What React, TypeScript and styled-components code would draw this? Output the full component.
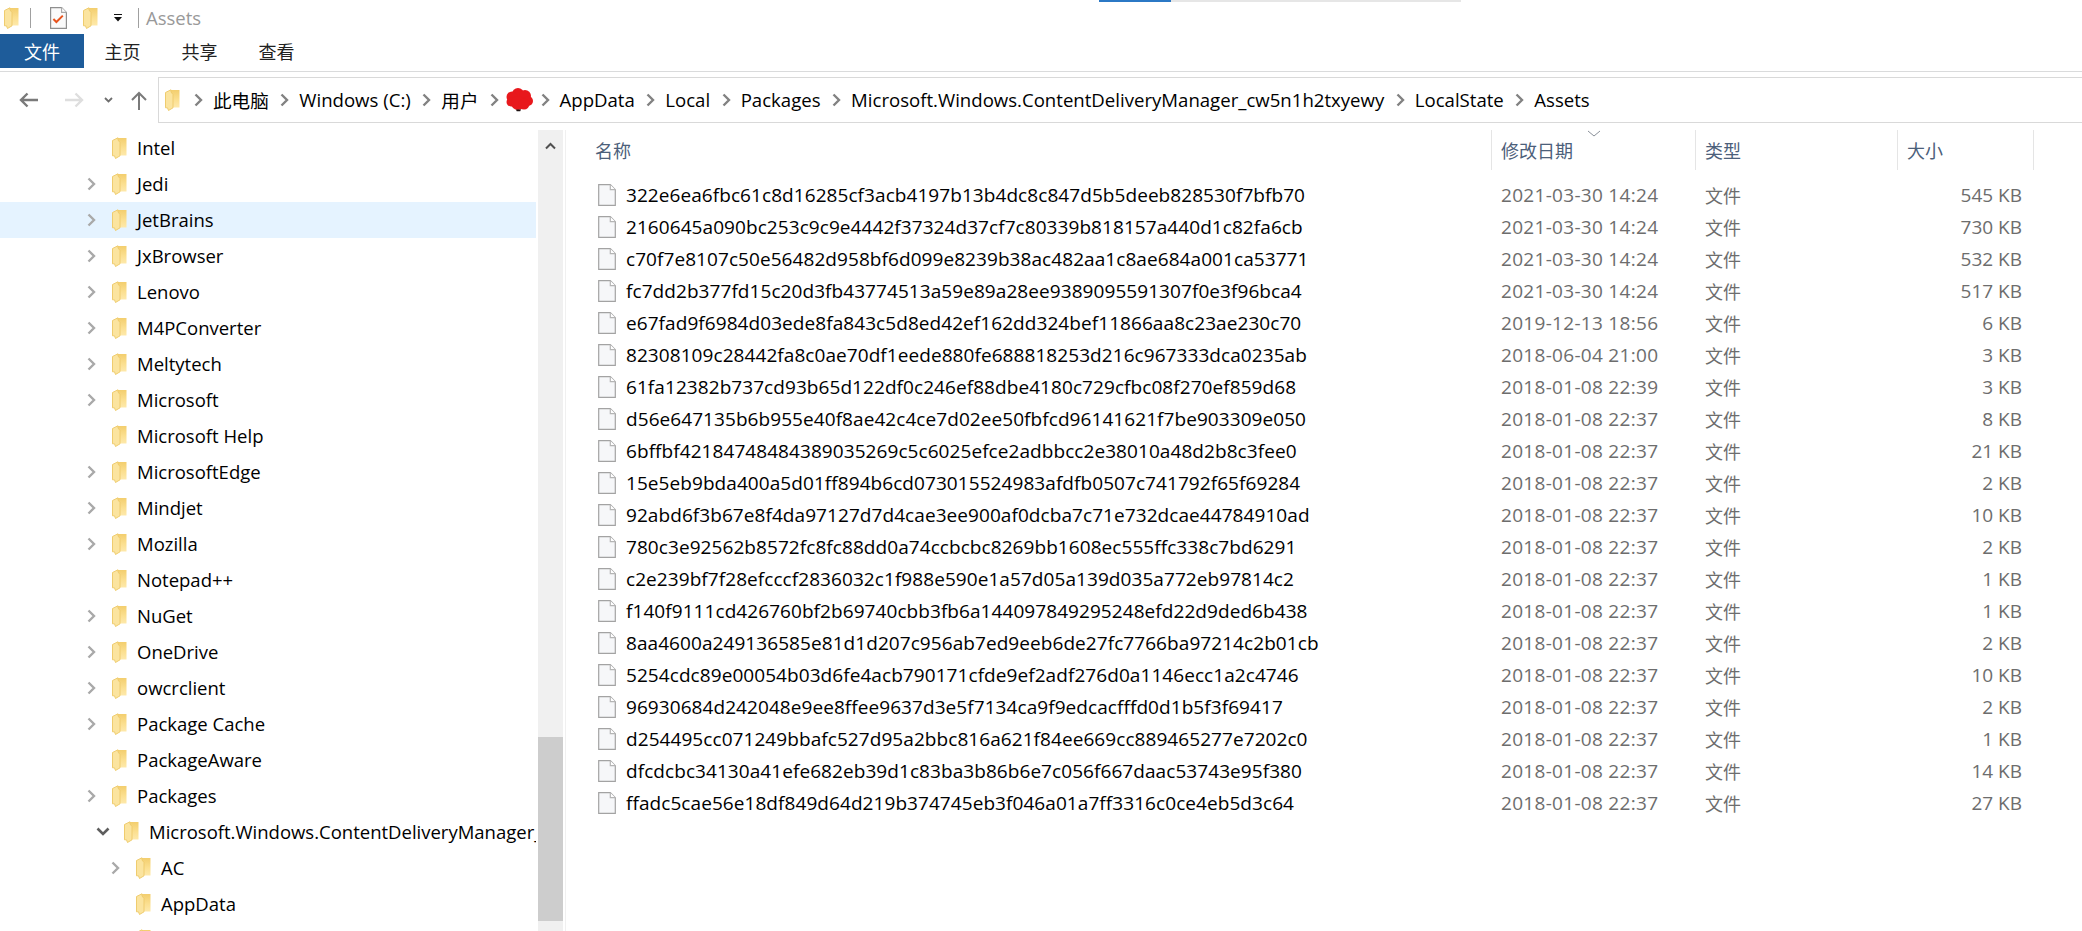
import styled, { createGlobalStyle } from "styled-components";

const uiFont = `"Open Sans", "Noto Sans CJK SC", sans-serif`;

const treeItems = [
  { name: "Intel", level: 0 },
  { name: "Jedi", level: 0, arrow: "right" },
  { name: "JetBrains", level: 0, arrow: "right", hover: true },
  { name: "JxBrowser", level: 0, arrow: "right" },
  { name: "Lenovo", level: 0, arrow: "right" },
  { name: "M4PConverter", level: 0, arrow: "right" },
  { name: "Meltytech", level: 0, arrow: "right" },
  { name: "Microsoft", level: 0, arrow: "right" },
  { name: "Microsoft Help", level: 0 },
  { name: "MicrosoftEdge", level: 0, arrow: "right" },
  { name: "Mindjet", level: 0, arrow: "right" },
  { name: "Mozilla", level: 0, arrow: "right" },
  { name: "Notepad++", level: 0 },
  { name: "NuGet", level: 0, arrow: "right" },
  { name: "OneDrive", level: 0, arrow: "right" },
  { name: "owcrclient", level: 0, arrow: "right" },
  { name: "Package Cache", level: 0, arrow: "right" },
  { name: "PackageAware", level: 0 },
  { name: "Packages", level: 0, arrow: "right" },
  { name: "Microsoft.Windows.ContentDeliveryManager_cw5n1h2txyewy", level: 1, arrow: "down" },
  { name: "AC", level: 2, arrow: "right" },
  { name: "AppData", level: 2 },
  { name: "", level: 2 },
];

const files = [
  ["322e6ea6fbc61c8d16285cf3acb4197b13b4dc8c847d5b5deeb828530f7bfb70", "2021-03-30 14:24", "545 KB"],
  ["2160645a090bc253c9c9e4442f37324d37cf7c80339b818157a440d1c82fa6cb", "2021-03-30 14:24", "730 KB"],
  ["c70f7e8107c50e56482d958bf6d099e8239b38ac482aa1c8ae684a001ca53771", "2021-03-30 14:24", "532 KB"],
  ["fc7dd2b377fd15c20d3fb43774513a59e89a28ee9389095591307f0e3f96bca4", "2021-03-30 14:24", "517 KB"],
  ["e67fad9f6984d03ede8fa843c5d8ed42ef162dd324bef11866aa8c23ae230c70", "2019-12-13 18:56", "6 KB"],
  ["82308109c28442fa8c0ae70df1eede880fe688818253d216c967333dca0235ab", "2018-06-04 21:00", "3 KB"],
  ["61fa12382b737cd93b65d122df0c246ef88dbe4180c729cfbc08f270ef859d68", "2018-01-08 22:39", "3 KB"],
  ["d56e647135b6b955e40f8ae42c4ce7d02ee50fbfcd96141621f7be903309e050", "2018-01-08 22:37", "8 KB"],
  ["6bffbf42184748484389035269c5c6025efce2adbbcc2e38010a48d2b8c3fee0", "2018-01-08 22:37", "21 KB"],
  ["15e5eb9bda400a5d01ff894b6cd073015524983afdfb0507c741792f65f69284", "2018-01-08 22:37", "2 KB"],
  ["92abd6f3b67e8f4da97127d7d4cae3ee900af0dcba7c71e732dcae44784910ad", "2018-01-08 22:37", "10 KB"],
  ["780c3e92562b8572fc8fc88dd0a74ccbcbc8269bb1608ec555ffc338c7bd6291", "2018-01-08 22:37", "2 KB"],
  ["c2e239bf7f28efcccf2836032c1f988e590e1a57d05a139d035a772eb97814c2", "2018-01-08 22:37", "1 KB"],
  ["f140f9111cd426760bf2b69740cbb3fb6a144097849295248efd22d9ded6b438", "2018-01-08 22:37", "1 KB"],
  ["8aa4600a249136585e81d1d207c956ab7ed9eeb6de27fc7766ba97214c2b01cb", "2018-01-08 22:37", "2 KB"],
  ["5254cdc89e00054b03d6fe4acb790171cfde9ef2adf276d0a1146ecc1a2c4746", "2018-01-08 22:37", "10 KB"],
  ["96930684d242048e9ee8ffee9637d3e5f7134ca9f9edcacfffd0d1b5f3f69417", "2018-01-08 22:37", "2 KB"],
  ["d254495cc071249bbafc527d95a2bbc816a621f84ee669cc889465277e7202c0", "2018-01-08 22:37", "1 KB"],
  ["dfcdcbc34130a41efe682eb39d1c83ba3b86b6e7c056f667daac53743e95f380", "2018-01-08 22:37", "14 KB"],
  ["ffadc5cae56e18df849d64d219b374745eb3f046a01a7ff3316c0ce4eb5d3c64", "2018-01-08 22:37", "27 KB"],
];

const crumbs = [
  "此电脑",
  "Windows (C:)",
  "用户",
  "",
  "AppData",
  "Local",
  "Packages",
  "Microsoft.Windows.ContentDeliveryManager_cw5n1h2txyewy",
  "LocalState",
  "Assets",
];

function FolderIcon() {
  return (
    <svg width="15" height="22" viewBox="0 0 15 22">
      <defs>
        <linearGradient id="folderBody" x1="0" y1="0" x2="0" y2="1">
          <stop offset="0" stopColor="#f3ce6e" />
          <stop offset="0.55" stopColor="#fbdf8f" />
          <stop offset="1" stopColor="#fee9ab" />
        </linearGradient>
      </defs>
      <path d="M5 1h9.500v17.500H5z" fill="url(#folderBody)" />
      <path d="M.5 3.500 6 .8V3l2 2.500v13.300L3.500 21.500 2.500 18.800H.5z" fill="#fbe49f" stroke="#efcc6e" strokeWidth="1" />
    </svg>
  );
}

function FileIcon() {
  return (
    <svg width="18" height="22" viewBox="0 0 18 22">
      <path d="M.7.7h11.600l5 5v15.600H.7z" fill="#f6f7f9" stroke="#a3a3a3" strokeWidth="1.2" />
      <path d="M12.300.7v5h5" fill="#fff" stroke="#b5b5b5" strokeWidth="1.2" />
    </svg>
  );
}

function Chevron({ dark }: { dark?: boolean }) {
  return (
    <svg width="9" height="14" viewBox="0 0 9 14">
      <path d="M1.500 1.500 7 7l-5.500 5.500" fill="none" stroke={dark ? "#828282" : "#a9a9a9"} strokeWidth="2.4" />
    </svg>
  );
}

function ChevronDown() {
  return (
    <svg width="14" height="10" viewBox="0 0 14 10">
      <path d="M1.500 1.500 7 7l5.500-5.500" fill="none" stroke="#5e5e5e" strokeWidth="2.6" />
    </svg>
  );
}

export default function App() {
  return (
    <Page>
      <GlobalStyle />
      <TitleBar>
        <FolderIcon />
        <TitleRule $left={11} />
        <TitleSlot $left={19}>
          <svg width="17" height="22" viewBox="0 0 17 22">
            <path d="M.6.6h11l4.800 4.800v16H.6z" fill="#fafafa" stroke="#8f8f8f" strokeWidth="1.2" />
            <path d="M11.600.6v4.800h4.800" fill="#fff" stroke="#a8a8a8" strokeWidth="1.1" />
            <path d="M3.400 12l3 3 6.400-6.400" fill="none" stroke="#e8541e" strokeWidth="2" />
          </svg>
        </TitleSlot>
        <TitleSlot $left={16}>
          <FolderIcon />
        </TitleSlot>
        <TitleSlot $left={16}>
          <svg width="8" height="8" viewBox="0 0 8 8">
            <path d="M0 0h8v1H0z" fill="#111" />
            <path d="M0 3h8L4 7.500z" fill="#111" />
          </svg>
        </TitleSlot>
        <TitleRule $left={16} />
        <WindowName>Assets</WindowName>
        <LoadBar />
      </TitleBar>

      <TabRow>
        <FileTab>文件</FileTab>
        <Tab>主页</Tab>
        <Tab>共享</Tab>
        <Tab>查看</Tab>
      </TabRow>

      <NavBar>
        <NavArrows>
          <svg width="19" height="16" viewBox="0 0 19 16">
            <path d="M19 8H2M8.500 1.500 2 8l6.500 6.500" fill="none" stroke="#7a7a7a" strokeWidth="2.4" />
          </svg>
          <svg width="19" height="16" viewBox="0 0 19 16">
            <path d="M0 8h17M10.500 1.500 17 8l-6.500 6.500" fill="none" stroke="#dedede" strokeWidth="2.4" />
          </svg>
          <svg width="9" height="6" viewBox="0 0 9 6">
            <path d="M1 1l3.500 3.500L8 1" fill="none" stroke="#6e6e6e" strokeWidth="1.8" />
          </svg>
          <svg width="16" height="19" viewBox="0 0 16 19">
            <path d="M8 19V2M1 9l7-7 7 7" fill="none" stroke="#7a7a7a" strokeWidth="2" />
          </svg>
        </NavArrows>
        <AddressBox>
          <FolderIcon />
          <CrumbList>
            {crumbs.map((crumb, i) => (
              <Crumb key={i}>
                <Chevron dark />
                {crumb ? (
                  <CrumbText>{crumb}</CrumbText>
                ) : (
                  <Blot width="27" height="24" viewBox="0 0 27 24">
                    <g fill="#e8181c">
                      <circle cx="12" cy="6" r="6" />
                      <circle cx="19" cy="8" r="6" />
                      <circle cx="22" cy="13" r="5" />
                      <circle cx="6" cy="9" r="5.500" />
                      <circle cx="5" cy="14" r="4.500" />
                      <circle cx="12" cy="15" r="7" />
                      <circle cx="18" cy="16" r="5.500" />
                    </g>
                    <path d="M10 21.500h5l-.8 1.800h-3.500z" fill="#1c1010" />
                  </Blot>
                )}
              </Crumb>
            ))}
          </CrumbList>
        </AddressBox>
      </NavBar>

      <Main>
        <Tree>
          {treeItems.map((item, i) => (
            <TreeRow key={i} $level={item.level} $hover={item.hover}>
              <ArrowSlot>
                {item.arrow === "right" && <Chevron />}
                {item.arrow === "down" && <ChevronDown />}
              </ArrowSlot>
              <FolderIcon />
              <TreeName>{item.name}</TreeName>
            </TreeRow>
          ))}
        </Tree>
        <ScrollBar>
          <ScrollUp>
            <svg width="11" height="8" viewBox="0 0 11 8">
              <path d="M1 6.500 5.500 2 10 6.500" fill="none" stroke="#505050" strokeWidth="2" />
            </svg>
          </ScrollUp>
          <ScrollThumb />
        </ScrollBar>
        <ListPane>
          <ListHeader>
            <NameHead>名称</NameHead>
            <HeadCell>
              修改日期
              <SortMark viewBox="0 0 14 7" width="14" height="7">
                <path d="M1 1l6 5 6-5" fill="none" stroke="#8a9099" strokeWidth="1" />
              </SortMark>
            </HeadCell>
            <HeadCell>类型</HeadCell>
            <HeadCell>大小</HeadCell>
            <EndRule />
          </ListHeader>
          {files.map(([name, date, size]) => (
            <FileRow key={name}>
              <NameCell>
                <FileIcon />
                <span>{name}</span>
              </NameCell>
              <DateCell>{date}</DateCell>
              <TypeCell>文件</TypeCell>
              <SizeCell>{size}</SizeCell>
            </FileRow>
          ))}
        </ListPane>
      </Main>
    </Page>
  );
}

const GlobalStyle = createGlobalStyle`
  html, body {
    margin: 0;
    background: #fff;
  }
  svg {
    flex: none;
  }
`;

const Page = styled.div`
  width: 2082px;
  height: 931px;
  overflow: hidden;
  background: #fff;
  font-family: ${uiFont};
  font-size: 18px;
  color: #000;
`;

const TitleBar = styled.div`
  position: relative;
  display: flex;
  align-items: center;
  height: 34px;
  padding: 2px 0 0 4px;
  box-sizing: border-box;
`;

const TitleSlot = styled.span<{ $left: number }>`
  display: flex;
  margin-left: ${(props) => props.$left}px;
`;

const TitleRule = styled.span<{ $left: number }>`
  width: 1px;
  height: 20px;
  margin-left: ${(props) => props.$left}px;
  background: #a0a0a0;
`;

const WindowName = styled.span`
  margin: 0 0 2px 7px;
  font-size: 18.5px;
  color: #999;
`;

const LoadBar = styled.div`
  position: absolute;
  top: 0;
  left: 1099px;
  width: 362px;
  height: 2px;
  background: linear-gradient(to right, #2b78c5 72px, #e6e6e6 72px);
`;

const TabRow = styled.div`
  display: flex;
  height: 37px;
  border-bottom: 1px solid #dadbdc;
`;

const Tab = styled.div`
  width: 77px;
  height: 34px;
  display: flex;
  align-items: center;
  justify-content: center;
  color: #222;
  font-size: 18px;
`;

const FileTab = styled(Tab)`
  width: 84px;
  background: #1e5c9a;
  color: #fff;
`;

const NavBar = styled.div`
  display: flex;
  align-items: center;
  margin-top: 5px;
  height: 46px;
`;

const NavArrows = styled.div`
  display: flex;
  align-items: center;
  width: 158px;
  padding-left: 19px;
  box-sizing: border-box;
  svg:nth-child(2) {
    margin-left: 27px;
  }
  svg:nth-child(3) {
    margin-left: 20px;
  }
  svg:nth-child(4) {
    margin-left: 18px;
  }
`;

const AddressBox = styled.div`
  flex: 1;
  height: 46px;
  box-sizing: border-box;
  display: flex;
  align-items: center;
  padding-left: 6px;
  border: 1px solid #d9d9d9;
  border-right: none;
`;

const CrumbList = styled.div`
  display: flex;
  align-items: center;
  margin-left: 14px;
`;

const Crumb = styled.div`
  display: flex;
  align-items: center;
  gap: 10px;
  margin-right: 11.5px;
  font-size: 18.6px;
`;

const CrumbText = styled.span`
  padding-bottom: 2px;
  white-space: nowrap;
`;

const Blot = styled.svg`
  margin: 0 -4px 0 -3px;
`;

const Main = styled.div`
  display: flex;
  margin-top: 7px;
  height: 801px;
`;

const Tree = styled.div`
  width: 536px;
  margin-right: 2px;
  flex: none;
  overflow: hidden;
`;

const TreeRow = styled.div<{ $level: number; $hover?: boolean }>`
  display: flex;
  align-items: center;
  height: 36px;
  padding-left: ${(props) => 84 + props.$level * 12}px;
  background: ${(props) => (props.$hover ? "#e5f3ff" : "transparent")};
  white-space: nowrap;
`;

const ArrowSlot = styled.span`
  display: flex;
  align-items: center;
  justify-content: center;
  flex: none;
  width: 14px;
  margin-right: 14px;
`;

const TreeName = styled.span`
  margin-left: 10px;
  padding-bottom: 2px;
  font-size: 18.5px;
`;

const ScrollBar = styled.div`
  position: relative;
  width: 25px;
  flex: none;
  background: #f0f0f0;
`;

const ScrollUp = styled.div`
  display: flex;
  justify-content: center;
  padding-top: 12px;
`;

const ScrollThumb = styled.div`
  position: absolute;
  left: 0;
  right: 0;
  top: 607px;
  height: 184px;
  background: #cdcdcd;
`;

const ListPane = styled.div`
  flex: 1;
  margin-left: 2px;
  border-left: 1px solid #f0f0f0;
`;

const columns = "925px 204px 202px 135px";

const ListHeader = styled.div`
  position: relative;
  display: grid;
  grid-template-columns: ${columns};
  height: 40px;
  margin-bottom: 9px;
  align-items: stretch;
  color: #4c607a;
`;

const HeadCell = styled.div`
  position: relative;
  display: flex;
  align-items: center;
  padding-left: 9px;
  border-left: 1px solid #e5e5e5;
`;

const NameHead = styled.div`
  display: flex;
  align-items: center;
  padding-left: 29px;
`;

const SortMark = styled.svg`
  position: absolute;
  top: 0;
  left: 95px;
`;

const EndRule = styled.span`
  position: absolute;
  top: 0;
  left: 1467px;
  width: 1px;
  height: 40px;
  background: #e5e5e5;
`;

const FileRow = styled.div`
  display: grid;
  grid-template-columns: ${columns};
  height: 32px;
  align-items: center;
  font-size: 19px;
`;

const NameCell = styled.div`
  display: flex;
  align-items: center;
  gap: 10px;
  padding-left: 32px;
  white-space: nowrap;
  letter-spacing: 0.07px;
`;

const DateCell = styled.div`
  padding-left: 10px;
  color: #6d6d6d;
  letter-spacing: 0.3px;
`;

const TypeCell = styled.div`
  padding-left: 10px;
  font-size: 18px;
  color: #6d6d6d;
`;

const SizeCell = styled.div`
  text-align: right;
  padding-right: 10px;
  color: #6d6d6d;
`;
